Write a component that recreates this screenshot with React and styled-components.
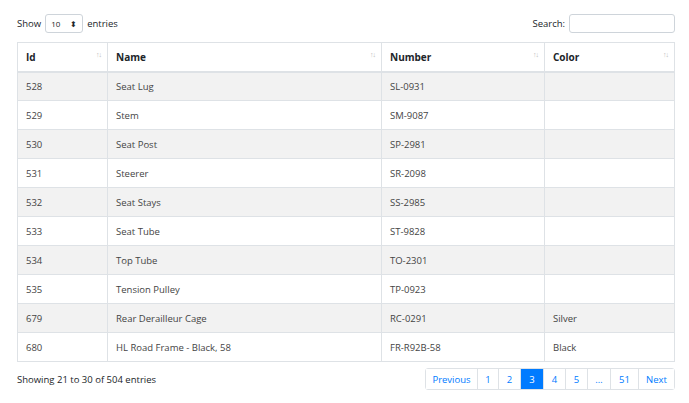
import React from "react";
import styled, { createGlobalStyle } from "styled-components";

const G = createGlobalStyle`
  body { margin: 0; background: #fff; font-family: "Open Sans", "Noto Sans", sans-serif; color: #212529; font-size: 9.5px; }
`;
const Page = styled.div` width: 658px; padding: 13px 0 0 17px; `;
const Top = styled.div` display: flex; justify-content: space-between; align-items: center; height: 20px; margin-bottom: 9px; `;
const Label = styled.label` display: flex; align-items: center; gap: 4px; `;
const Sel = styled.div`
  width: 38px; height: 19px; box-sizing: border-box; border: 1px solid #ced4da; border-radius: 3px;
  display: flex; align-items: center; justify-content: space-between; padding: 0 5px; font-size: 8px;
`;
const Input = styled.div` width: 106px; height: 19px; box-sizing: border-box; border: 1px solid #ced4da; border-radius: 3px; `;
const Table = styled.table` width: 100%; border-collapse: collapse; table-layout: fixed; border: 1px solid #dee2e6; `;
const Th = styled.th`
  height: 29px; box-sizing: border-box; text-align: left; font-weight: 700; padding: 0 8px; border: 1px solid #dee2e6;
  border-bottom-width: 2px; position: relative; font-size: 10px;
`;
const Sort = styled.span` position: absolute; right: 6px; top: 7px; font-size: 7px; color: #bbb; letter-spacing: -1px; `;
const Tr = styled.tr` background: ${p => (p.$odd ? "#f2f2f2" : "#fff")}; `;
const Td = styled.td` height: 29px; box-sizing: border-box; padding: 0 8px; border: 1px solid #dee2e6; color: #444; `;
const Bottom = styled.div` display: flex; justify-content: space-between; align-items: center; margin-top: 6px; `;
const Pager = styled.div` display: flex; border: 1px solid #dee2e6; border-radius: 3px; height: 22px; box-sizing: border-box; `;
const Pg = styled.div`
  width: ${p => p.$w}px; display: flex; align-items: center; justify-content: center; color: ${p => (p.$a ? "#fff" : "#007bff")};
  background: ${p => (p.$a ? "#007bff" : "#fff")}; border-left: ${p => (p.$first ? "none" : "1px solid #dee2e6")}; font-size: 9.5px;
`;

const rows = [
  ["528", "Seat Lug", "SL-0931", ""], ["529", "Stem", "SM-9087", ""], ["530", "Seat Post", "SP-2981", ""],
  ["531", "Steerer", "SR-2098", ""], ["532", "Seat Stays", "SS-2985", ""], ["533", "Seat Tube", "ST-9828", ""],
  ["534", "Top Tube", "TO-2301", ""], ["535", "Tension Pulley", "TP-0923", ""],
  ["679", "Rear Derailleur Cage", "RC-0291", "Silver"], ["680", "HL Road Frame - Black, 58", "FR-R92B-58", "Black"],
];
const pages = [["Previous", 51], ["1", 20], ["2", 21], ["3", 22, 1], ["4", 21], ["5", 21], ["…", 22], ["51", 27], ["Next", 35]];

export default function App() {
  return (
    <Page>
      <G />
      <Top>
        <Label>Show <Sel>10 <span>⬍</span></Sel> entries</Label>
        <Label>Search: <Input /></Label>
      </Top>
      <Table>
        <colgroup><col style={{ width: 90 }} /><col style={{ width: 274 }} /><col style={{ width: 163 }} /><col /></colgroup>
        <thead><tr>{["Id", "Name", "Number", "Color"].map(h => <Th key={h}>{h}<Sort>↑↓</Sort></Th>)}</tr></thead>
        <tbody>{rows.map((r, i) => <Tr key={r[0]} $odd={i % 2 === 0}>{r.map((c, j) => <Td key={j}>{c}</Td>)}</Tr>)}</tbody>
      </Table>
      <Bottom>
        <span>Showing 21 to 30 of 504 entries</span>
        <Pager>{pages.map(([t, w, a], i) => <Pg key={t} $w={w} $a={a} $first={i === 0}>{t}</Pg>)}</Pager>
      </Bottom>
    </Page>
  );
}
